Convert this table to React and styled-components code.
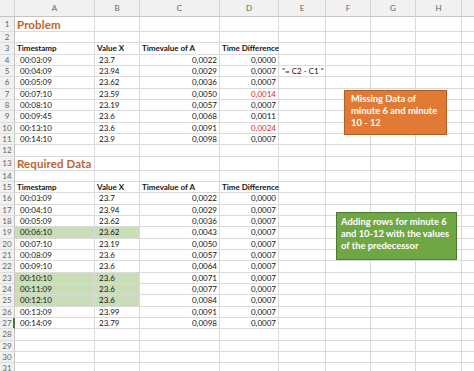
import React from "react";
import styled, { createGlobalStyle } from "styled-components";

const GlobalStyle = createGlobalStyle`
  html, body {
    margin: 0;
    padding: 0;
    background: #ffffff;
    overflow: hidden;
  }
  body {
    font-family: Lato, "Liberation Sans", sans-serif;
  }
`;

const ROW_H = 11.33;

const columns = ["A", "B", "C", "D", "E", "F", "G", "H", ""];
const colWidths = "15px 80px 45px 80px 59px 47px 45px 45px 46px 40px";

const heightOf = (n) => {
  if (n === 1) return 15;
  if (n === 13) return 14;
  return ROW_H;
};

const headers = ["Timestamp", "Value X", "Timevalue of A", "Time Difference"];

const rows = {
  1: { title: "Problem" },
  3: { head: true },
  4: { data: ["00:03:09", "23.7", "0,0022", "0,0000"] },
  5: { data: ["00:04:09", "23.94", "0,0029", "0,0007"], note: "\"= C2 - C1 \"" },
  6: { data: ["00:05:09", "23.62", "0,0036", "0,0007"] },
  7: { data: ["00:07:10", "23.59", "0,0050", "0,0014"], red: true },
  8: { data: ["00:08:10", "23.19", "0,0057", "0,0007"] },
  9: { data: ["00:09:45", "23.6", "0,0068", "0,0011"] },
  10: { data: ["00:13:10", "23.6", "0,0091", "0,0024"], red: true },
  11: { data: ["00:14:10", "23.9", "0,0098", "0,0007"] },
  13: { title: "Required Data" },
  15: { head: true },
  16: { data: ["00:03:09", "23.7", "0,0022", "0,0000"] },
  17: { data: ["00:04:10", "23.94", "0,0029", "0,0007"] },
  18: { data: ["00:05:09", "23.62", "0,0036", "0,0007"] },
  19: { data: ["00:06:10", "23.62", "0,0043", "0,0007"], fill: true },
  20: { data: ["00:07:10", "23.19", "0,0050", "0,0007"] },
  21: { data: ["00:08:09", "23.6", "0,0057", "0,0007"] },
  22: { data: ["00:09:10", "23.6", "0,0064", "0,0007"] },
  23: { data: ["00:10:10", "23.6", "0,0071", "0,0007"], fill: true },
  24: { data: ["00:11:09", "23.6", "0,0077", "0,0007"], fill: true },
  25: { data: ["00:12:10", "23.6", "0,0084", "0,0007"], fill: true },
  26: { data: ["00:13:09", "23.99", "0,0091", "0,0007"] },
  27: { data: ["00:14:09", "23.79", "0,0098", "0,0007"], active: true },
};

const Sheet = styled.div`
  position: relative;
  display: grid;
  grid-template-columns: ${colWidths};
  grid-template-rows: 17px ${Array.from({ length: 31 }, (_, i) => heightOf(i + 1) + "px").join(" ")};
  width: 474px;
  height: 371px;
  overflow: hidden;
  color: #141414;
  font-size: 8px;
`;

const ColHead = styled.div`
  background: #f1f1f1;
  border-right: 1px solid #d6d6d6;
  border-bottom: 1px solid #c4c4c4;
  display: flex;
  align-items: center;
  justify-content: center;
  color: #666;
  font-size: 8px;
`;

const RowNum = styled.div`
  background: #f1f1f1;
  border-right: 1px solid ${(p) => (p.$active ? "#3f7a3a" : "#c4c4c4")};
  border-bottom: 1px solid #dedede;
  box-shadow: ${(p) => (p.$active ? "inset -1px 0 0 #3f7a3a" : "none")};
  display: flex;
  align-items: center;
  justify-content: center;
  color: #666;
  font-size: 8px;
`;

const Cell = styled.div`
  border-right: 1px solid #dadada;
  border-bottom: 1px solid #dadada;
  background: ${(p) => (p.$fill ? "#c9deb7" : "#ffffff")};
  display: flex;
  align-items: center;
  justify-content: ${(p) => (p.$right ? "flex-end" : "flex-start")};
  padding: 0 ${(p) => (p.$right ? "2px" : "0")} 0 ${(p) => p.$indent}px;
  font-weight: ${(p) => (p.$bold ? 700 : 400)};
  color: ${(p) => (p.$red ? "#e0281e" : "#141414")};
  white-space: nowrap;
  overflow: visible;
  min-width: 0;
  box-sizing: border-box;
  position: relative;
  z-index: ${(p) => (p.$over ? 1 : 0)};
`;

const Title = styled.span`
  font-size: 11.5px;
  font-weight: 700;
  color: #c3622a;
  letter-spacing: 0.1px;
`;

const Callout = styled.div`
  position: absolute;
  left: ${(p) => p.$x}px;
  top: ${(p) => p.$y}px;
  width: ${(p) => p.$w}px;
  height: ${(p) => p.$h}px;
  box-sizing: border-box;
  background: ${(p) => p.$bg};
  border: 1px solid ${(p) => p.$edge};
  color: #ffffff;
  font-weight: 700;
  font-size: 9.4px;
  line-height: 12px;
  padding: ${(p) => p.$pad};
  z-index: 3;
`;

const renderRow = (n) => {
  const row = rows[n] || {};
  const cells = [];
  columns.forEach((col, i) => {
    const key = `${n}-${i}`;
    let content = null;
    let props = { $indent: 3 };
    if (row.title && i === 0) {
      content = <Title>{row.title}</Title>;
      props = { $indent: 2, $over: true };
    } else if (row.head && i < 4) {
      content = headers[i];
      props = { $bold: true, $indent: 2, $over: true };
    } else if (row.data && i < 4) {
      content = row.data[i];
      const right = i >= 2;
      props = {
        $indent: right ? 0 : 5,
        $right: right,
        $red: row.red && i === 3,
        $fill: row.fill && i < 2,
      };
      if (i === 1) props.$indent = 4;
    } else if (row.note && i === 4) {
      content = row.note;
      props = { $indent: 3 };
    }
    cells.push(
      <Cell key={key} {...props}>
        {content}
      </Cell>
    );
  });
  return [
    <RowNum key={`n-${n}`} $active={row.active}>
      {n}
    </RowNum>,
    ...cells,
  ];
};

export default function App() {
  return (
    <>
      <GlobalStyle />
      <Sheet>
        <ColHead />
        {columns.map((c, i) => (
          <ColHead key={`h-${i}`}>{c}</ColHead>
        ))}
        {Array.from({ length: 31 }, (_, i) => renderRow(i + 1))}
        <Callout $x={344} $y={90} $w={103} $h={45} $bg="#e07a35" $edge="#b25d22" $pad="2px 6px">
          Missing Data of minute 6 and minute 10 - 12
        </Callout>
        <Callout $x={336} $y={212} $w={121} $h={48} $bg="#6fa744" $edge="#4f7d30" $pad="3px 4px">
          Adding rows for minute 6 and 10-12 with the values of the predecessor
        </Callout>
      </Sheet>
    </>
  );
}
